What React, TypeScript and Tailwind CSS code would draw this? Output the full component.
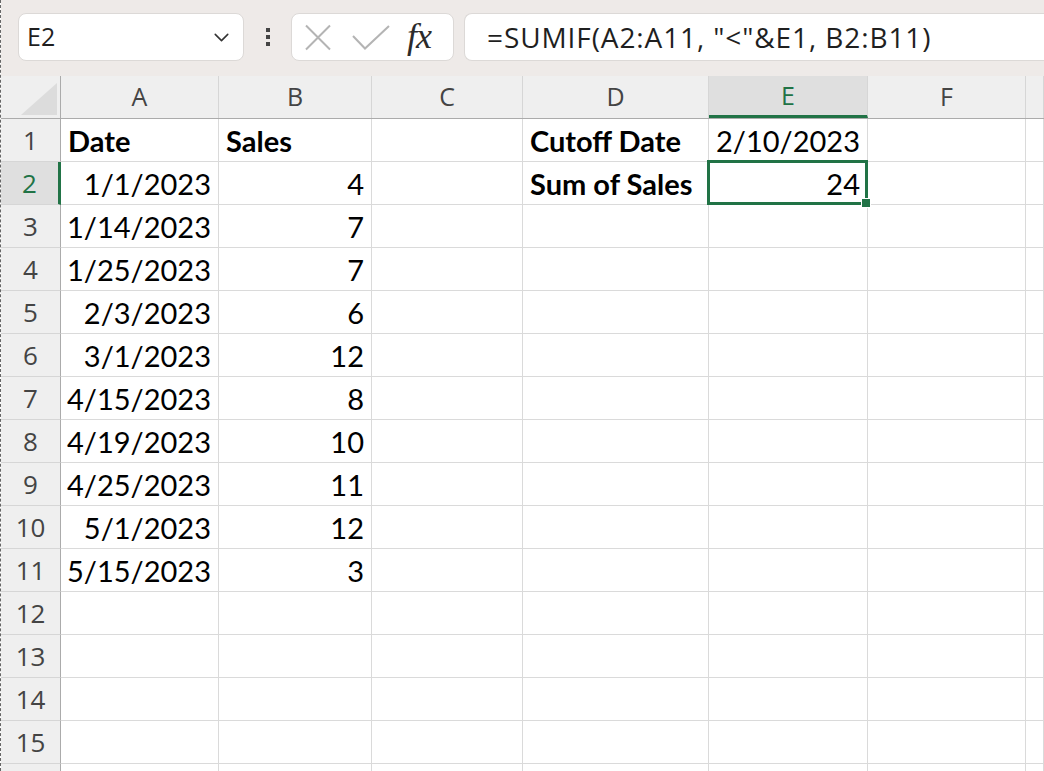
import { ChevronDown } from "lucide-react";

type Cell = { text: string; bold?: boolean; right?: boolean };

const colHeads = [
  { id: "A", w: "w-[158px]" },
  { id: "B", w: "w-[153px]" },
  { id: "C", w: "w-[151px]" },
  { id: "D", w: "w-[186px]" },
  { id: "E", w: "w-[159px]" },
  { id: "F", w: "w-[158px]" },
  { id: "G", w: "flex-1" },
];

const dates = [
  ["1/1/2023", "4"],
  ["1/14/2023", "7"],
  ["1/25/2023", "7"],
  ["2/3/2023", "6"],
  ["3/1/2023", "12"],
  ["4/15/2023", "8"],
  ["4/19/2023", "10"],
  ["4/25/2023", "11"],
  ["5/1/2023", "12"],
  ["5/15/2023", "3"],
];

// sheet contents, keyed by row number then column letter
function cellAt(row: number, col: string): Cell | null {
  if (row === 1) {
    if (col === "A") return { text: "Date", bold: true };
    if (col === "B") return { text: "Sales", bold: true };
    if (col === "D") return { text: "Cutoff Date", bold: true };
    if (col === "E") return { text: "2/10/2023", right: true };
  }
  if (row === 2) {
    if (col === "D") return { text: "Sum of Sales", bold: true };
    if (col === "E") return { text: "24", right: true };
  }
  const d = dates[row - 2];
  if (d) {
    if (col === "A") return { text: d[0], right: true };
    if (col === "B") return { text: d[1], right: true };
  }
  return null;
}

function FormulaBar() {
  return (
    <div className="h-[76px] bg-[#eeeae8] flex items-start pt-[13px] pl-[17px]">
      {/* name box */}
      <div className="w-[226px] h-[48px] bg-white rounded-[8px] border border-[#dcd9d7] flex items-center justify-between pl-[8px] pr-[9px]">
        <span className="text-[25px] text-[#1f1f1f]">E2</span>
        <ChevronDown className="w-[25px] h-[25px] text-[#333]" strokeWidth={1.5} />
      </div>
      {/* vertical dots */}
      <div className="w-[47px] h-[48px] flex flex-col items-center justify-center gap-[3px]">
        <div className="w-[4px] h-[4px] bg-[#444]" />
        <div className="w-[4px] h-[4px] bg-[#444]" />
        <div className="w-[4px] h-[4px] bg-[#444]" />
      </div>
      {/* cancel / enter / fx */}
      <div className="w-[163px] h-[48px] bg-white rounded-[8px] border border-[#dcd9d7] flex items-center pl-[12px]">
        <svg width="28" height="27" viewBox="0 0 28 27" className="mr-[20px]">
          <path d="M2 1.5 L26 25.5 M26 1.5 L2 25.5" stroke="#b4b4b4" strokeWidth="2" fill="none" />
        </svg>
        <svg width="38" height="25" viewBox="0 0 38 25" className="mr-[17px]">
          <path d="M1 11 L13 23.5 L37 1" stroke="#b4b4b4" strokeWidth="2" fill="none" />
        </svg>
        <span className="font-['Liberation_Serif',serif] italic text-[36px] leading-none text-[#2b2b2b] tracking-[-1px] -mt-[2px]">
          fx
        </span>
      </div>
      <div className="ml-[10px] flex-1 h-[48px] bg-white rounded-l-[8px] border border-r-0 border-[#dcd9d7] flex items-center pl-[22px]">
        <span className="text-[28px] tracking-[0.9px] text-[#1f1f1f] whitespace-nowrap">
          =SUMIF(A2:A11, "&lt;"&amp;E1, B2:B11)
        </span>
      </div>
    </div>
  );
}

function HeaderRow() {
  return (
    <div className="flex h-[43px] bg-[#efefef] border-b border-[#ababab]">
      <div className="w-[60px] shrink-0 border-r border-[#ababab] relative">
        <svg width="36" height="32" viewBox="0 0 36 32" className="absolute right-[3px] bottom-[3px]">
          <path d="M36 0 L36 32 L0 32 Z" fill="#dcdcdc" />
        </svg>
      </div>
      {colHeads.map((c) => {
        const sel = c.id === "E";
        return (
          <div
            key={c.id}
            className={`${c.w} shrink-0 border-r border-[#d6d6d6] flex items-center justify-center text-[25px] ${
              sel ? "bg-[#dfdfdf] text-[#217346] border-b-[3px] border-b-[#217346]" : "text-[#444]"
            }`}
          >
            {c.id === "G" ? "" : c.id}
          </div>
        );
      })}
    </div>
  );
}

function SheetRow({ n }: { n: number }) {
  const sel = n === 2;
  return (
    <div className="flex h-[43px]">
      <div
        className={`w-[60px] shrink-0 flex items-center justify-center text-[26px] border-b border-[#d6d6d6] ${
          sel
            ? "bg-[#dfdfdf] text-[#217346] border-r-[3px] border-r-[#217346]"
            : "bg-[#efefef] text-[#444] border-r border-r-[#ababab]"
        }`}
      >
        {n <= 15 ? n : ""}
      </div>
      {colHeads.map((c) => {
        const cell = cellAt(n, c.id);
        const active = sel && c.id === "E";
        return (
          <div
            key={c.id}
            className={`${c.w} shrink-0 relative border-r border-b border-[#dadada] flex items-center px-[7px] text-[29px] text-black font-['Lato',sans-serif] whitespace-nowrap ${
              cell?.right ? "justify-end" : "justify-start"
            } ${cell?.bold ? "font-bold" : ""}`}
          >
            <span className="pt-[1px]">{cell?.text}</span>
            {active && (
              <div className="absolute z-10 -left-[2px] -top-[2px] -right-[1px] -bottom-[1px] border-[3px] border-[#217346]">
                <div className="absolute -right-[6px] -bottom-[6px] w-[10px] h-[10px] bg-[#217346] border border-white" />
              </div>
            )}
          </div>
        );
      })}
    </div>
  );
}

export default function App() {
  const rows = Array.from({ length: 16 }, (_, i) => i + 1);
  return (
    <div className="w-[1044px] h-[771px] overflow-hidden bg-white border-l border-dashed border-[#666] font-['Open_Sans',sans-serif]">
      <FormulaBar />
      <HeaderRow />
      {rows.map((n) => (
        <SheetRow key={n} n={n} />
      ))}
    </div>
  );
}
